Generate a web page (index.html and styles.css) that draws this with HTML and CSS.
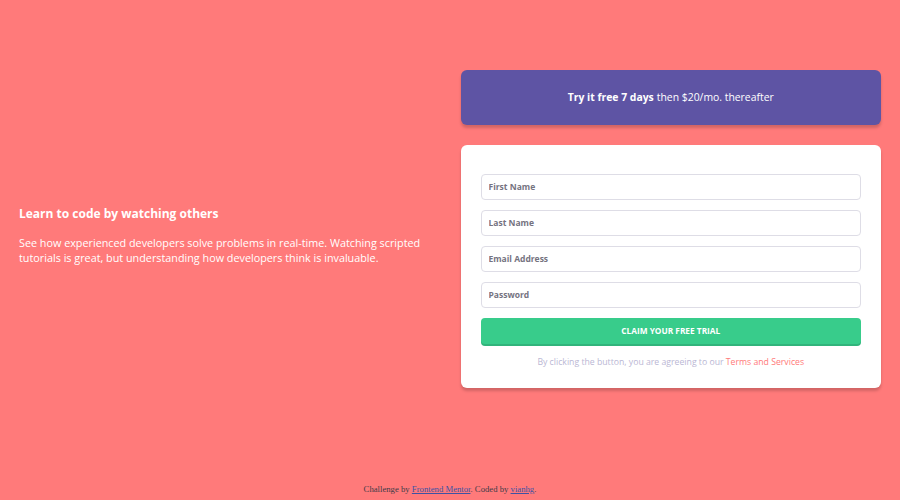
FILE: index.html
```html
<!DOCTYPE html>
<html lang="en">
<head>
<meta charset="utf-8">
<title>Intro component with sign up form</title>
<link rel="stylesheet" href="styles.css">
</head>
<body>
<div class="page">
  <main class="main">
    <section class="intro">
      <h1 class="intro-title">Learn to code by watching others</h1>
      <p class="intro-text">See how experienced developers solve problems in real-time. Watching scripted tutorials is great, but understanding how developers think is invaluable.</p>
    </section>
    <section class="signup">
      <div class="offer"><strong>Try it free 7 days</strong> then $20/mo. thereafter</div>
      <form class="card">
        <input class="field" type="text" placeholder="First Name">
        <input class="field" type="text" placeholder="Last Name">
        <input class="field" type="email" placeholder="Email Address">
        <input class="field" type="password" placeholder="Password">
        <button class="submit" type="button">CLAIM YOUR FREE TRIAL</button>
        <p class="terms">By clicking the button, you are agreeing to our <a href="#">Terms and Services</a></p>
      </form>
    </section>
  </main>
  <footer class="attribution">Challenge by <a href="#">Frontend Mentor</a>. Coded by <a href="#">vianhg</a>.</footer>
</div>
</body>
</html>
```
FILE: styles.css
```css
* { box-sizing: border-box; }
html, body { margin: 0; padding: 0; }
body {
  background: #ff7a7a;
  font-family: "Open Sans", "Liberation Sans", sans-serif;
  color: #fff;
}
.page {
  min-height: 500px;
  display: flex;
  flex-direction: column;
}
.main {
  flex: 1;
  display: grid;
  grid-template-columns: 1fr 1fr;
  column-gap: 21px;
  align-items: center;
  padding: 0 19px;
}
.intro {
  margin-top: 2px;
}
.intro-title {
  margin: 0 0 13px;
  font-size: 12px;
  font-weight: 700;
}
.intro-text {
  margin: 0;
  font-size: 10.8px;
  line-height: 15px;
}
.signup {
  display: flex;
  flex-direction: column;
  gap: 20px;
  margin-top: -11px;
}
.offer {
  background: #5e54a4;
  border-radius: 6px;
  height: 55px;
  display: flex;
  align-items: center;
  justify-content: center;
  font-size: 10.4px;
  box-shadow: 0 3px 3px rgba(0,0,0,0.18);
}
.offer strong { font-weight: 700; margin-right: 3px; }
.card {
  background: #fff;
  border-radius: 6px;
  padding: 29px 20px 20px;
  display: flex;
  flex-direction: column;
  gap: 10px;
  box-shadow: 0 3px 3px rgba(0,0,0,0.18);
}
.field {
  height: 26px;
  border: 1px solid #dedde6;
  border-radius: 4px;
  padding: 0 7px;
  font-family: inherit;
  font-size: 8.5px;
  font-weight: 700;
  color: #3d3b48;
  outline: none;
}
.field::placeholder { color: #75737f; }
.submit {
  height: 26px;
  border: none;
  border-radius: 4px;
  background: #38cc8b;
  color: #fff;
  font-family: inherit;
  font-size: 8.3px;
  font-weight: 700;
  box-shadow: 0 2px 0 #31b47b;
}
.terms {
  margin: 2px 0 0;
  text-align: center;
  font-size: 8.7px;
  color: #bab7d4;
}
.terms a { color: #ff7979; text-decoration: none; }
.attribution {
  font-family: "Liberation Serif", serif;
  font-size: 8.7px;
  text-align: center;
  color: #3d3b48;
  padding: 16px 0 6px;
}
.attribution a { color: hsl(228, 45%, 44%); }
```
